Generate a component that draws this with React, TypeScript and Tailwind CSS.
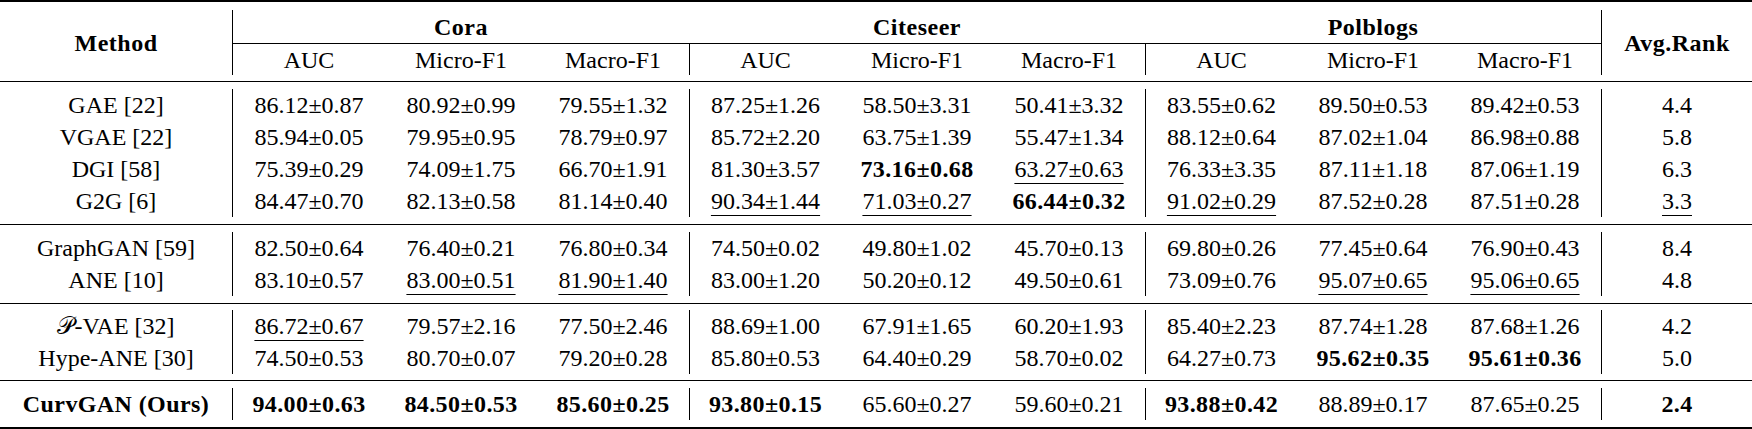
import React from 'react';

// cell value: "b:" = bold, "u:" = underlined, plain otherwise
type Row = { method: string; cells: string[]; bold?: boolean };

const sections: Row[][] = [
  [
    { method: 'GAE [22]', cells: ['86.12±0.87', '80.92±0.99', '79.55±1.32', '87.25±1.26', '58.50±3.31', '50.41±3.32', '83.55±0.62', '89.50±0.53', '89.42±0.53', '4.4'] },
    { method: 'VGAE [22]', cells: ['85.94±0.05', '79.95±0.95', '78.79±0.97', '85.72±2.20', '63.75±1.39', '55.47±1.34', '88.12±0.64', '87.02±1.04', '86.98±0.88', '5.8'] },
    { method: 'DGI [58]', cells: ['75.39±0.29', '74.09±1.75', '66.70±1.91', '81.30±3.57', 'b:73.16±0.68', 'u:63.27±0.63', '76.33±3.35', '87.11±1.18', '87.06±1.19', '6.3'] },
    { method: 'G2G [6]', cells: ['84.47±0.70', '82.13±0.58', '81.14±0.40', 'u:90.34±1.44', 'u:71.03±0.27', 'b:66.44±0.32', 'u:91.02±0.29', '87.52±0.28', '87.51±0.28', 'u:3.3'] },
  ],
  [
    { method: 'GraphGAN [59]', cells: ['82.50±0.64', '76.40±0.21', '76.80±0.34', '74.50±0.02', '49.80±1.02', '45.70±0.13', '69.80±0.26', '77.45±0.64', '76.90±0.43', '8.4'] },
    { method: 'ANE [10]', cells: ['83.10±0.57', 'u:83.00±0.51', 'u:81.90±1.40', '83.00±1.20', '50.20±0.12', '49.50±0.61', '73.09±0.76', 'u:95.07±0.65', 'u:95.06±0.65', '4.8'] },
  ],
  [
    { method: '𝒫-VAE [32]', cells: ['u:86.72±0.67', '79.57±2.16', '77.50±2.46', '88.69±1.00', '67.91±1.65', '60.20±1.93', '85.40±2.23', '87.74±1.28', '87.68±1.26', '4.2'] },
    { method: 'Hype-ANE [30]', cells: ['74.50±0.53', '80.70±0.07', '79.20±0.28', '85.80±0.53', '64.40±0.29', '58.70±0.02', '64.27±0.73', 'b:95.62±0.35', 'b:95.61±0.36', '5.0'] },
  ],
  [
    { method: 'CurvGAN (Ours)', bold: true, cells: ['b:94.00±0.63', 'b:84.50±0.53', 'b:85.60±0.25', 'b:93.80±0.15', '65.60±0.27', '59.60±0.21', 'b:93.88±0.42', '88.89±0.17', '87.65±0.25', 'b:2.4'] },
  ],
];

const metrics = ['AUC', 'Micro-F1', 'Macro-F1'];
const datasets = ['Cora', 'Citeseer', 'Polblogs'];
const sectionPad = ['py-[7px]', 'py-[7px]', 'py-[6px]', 'py-[7px]'];

function Value({ v }: { v: string }) {
  if (v.startsWith('b:')) return <span className="font-bold tracking-[0.4px]">{v.slice(2)}</span>;
  if (v.startsWith('u:'))
    return <span className="underline decoration-1 underline-offset-[6px]">{v.slice(2)}</span>;
  return <span>{v}</span>;
}

function DataRow({ row }: { row: Row }) {
  return (
    <div className="flex h-[32px] items-center">
      <div className={`w-[233px] h-full border-r border-black flex items-center justify-center ${row.bold ? 'font-bold tracking-[0.4px]' : ''}`}>
        {row.method}
      </div>
      {row.cells.slice(0, 9).map((c, i) => (
        <div
          key={i}
          className={`w-[152px] h-full flex items-center justify-center ${i === 3 || i === 6 ? 'border-l border-black' : ''}`}
        >
          <Value v={c} />
        </div>
      ))}
      <div className="flex-1 h-full border-l border-black flex items-center justify-center">
        <Value v={row.cells[9]} />
      </div>
    </div>
  );
}

export default function App() {
  return (
    <div className="w-[1752px] h-[429px] bg-white text-black text-[24px] leading-none font-['Liberation_Serif',serif] flex flex-col">
      <div className="h-[2px] bg-black" />
      {/* header */}
      <div className="flex h-[79px] pt-[8px] pb-[6px]">
        <div className="w-[233px] border-r border-black flex items-center justify-center font-bold tracking-[0.5px]">Method</div>
        <div className="w-[1368px] flex flex-col">
          <div className="flex h-[34px] border-b border-black">
            {datasets.map((d) => (
              <div key={d} className="w-[456px] flex items-center justify-center font-bold tracking-[0.5px]">{d}</div>
            ))}
          </div>
          <div className="flex flex-1">
            {datasets.map((d, di) =>
              metrics.map((m, mi) => (
                <div
                  key={d + m}
                  className={`w-[152px] flex items-center justify-center ${di > 0 && mi === 0 ? 'border-l border-black' : ''}`}
                >
                  {m}
                </div>
              ))
            )}
          </div>
        </div>
        <div className="flex-1 border-l border-black flex items-center justify-center font-bold tracking-[0.5px]">Avg.Rank</div>
      </div>
      {sections.map((sec, si) => (
        <React.Fragment key={si}>
          <div className="h-px bg-black" />
          <div className={`${sectionPad[si]} flex flex-col`}>
            {sec.map((r) => (
              <DataRow key={r.method} row={r} />
            ))}
          </div>
        </React.Fragment>
      ))}
      <div className="h-[2px] bg-black" />
    </div>
  );
}
